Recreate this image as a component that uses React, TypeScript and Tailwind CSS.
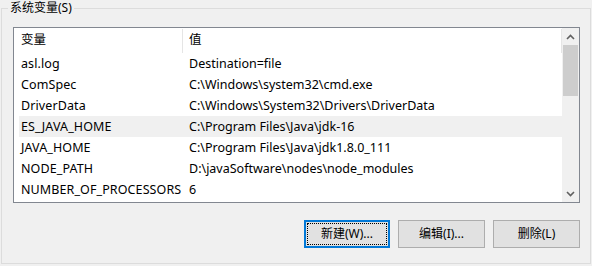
import React from "react";

const rows: [string, string][] = [
  ["asl.log", "Destination=file"],
  ["ComSpec", "C:\\Windows\\system32\\cmd.exe"],
  ["DriverData", "C:\\Windows\\System32\\Drivers\\DriverData"],
  ["ES_JAVA_HOME", "C:\\Program Files\\Java\\jdk-16"],
  ["JAVA_HOME", "C:\\Program Files\\Java\\jdk1.8.0_111"],
  ["NODE_PATH", "D:\\javaSoftware\\nodes\\node_modules"],
  ["NUMBER_OF_PROCESSORS", "6"],
];

const font = {
  fontFamily: '"Segoe UI", "Noto Sans", "Noto Sans CJK SC", sans-serif',
};

function Chevron({ up }: { up?: boolean }) {
  return (
    <svg width="9" height="6" viewBox="0 0 9 6">
      <polyline
        points={up ? "1,5 4.5,1.5 8,5" : "1,1 4.5,4.5 8,1"}
        fill="none"
        stroke="#606060"
        strokeWidth="1.6"
      />
    </svg>
  );
}

export default function App() {
  return (
    <div
      className="w-[592px] h-[266px] bg-[#f0f0f0] text-[12px] text-black pt-[8px] pl-[1px]"
      style={font}
    >
      <div className="relative w-[590px] h-[256px] border border-[#dcdcdc] pl-[11px] pt-[18px]">
        <div className="absolute left-[6px] top-[-9px] bg-[#f0f0f0] px-[2px] leading-[16px]">
          系统变量(S)
        </div>
        <div className="flex w-[567px] h-[176px] border border-[#828790] bg-white text-[12.5px]">
          <div className="flex-1 flex flex-col">
            <div className="flex h-[25px] items-center">
              <div className="w-[169px] h-[24px] pl-[7px] flex items-center border-r border-[#e5e5e5]">
                变量
              </div>
              <div className="flex-1 h-[24px] pl-[6px] flex items-center border-r border-[#e5e5e5]">
                值
              </div>
            </div>
            {rows.map(([k, v], i) => (
              <div
                key={k}
                className={
                  "flex h-[21px] items-center pt-[2px] ml-[5px] " +
                  (i === 3 ? "bg-[#f0f0f0]" : "")
                }
              >
                <div className="w-[170px] pl-[2px] whitespace-nowrap tracking-[0.1px]">{k}</div>
                <div className="whitespace-nowrap">{v}</div>
              </div>
            ))}
          </div>
          <div className="w-[17px] flex flex-col bg-[#f0f0f0]">
            <div className="h-[17px] flex items-center justify-center">
              <Chevron up />
            </div>
            <div className="mx-[1px] h-[51px] bg-[#cdcdcd]" />
            <div className="flex-1" />
            <div className="h-[17px] flex items-center justify-center">
              <Chevron />
            </div>
          </div>
        </div>
        <div className="flex justify-end gap-[8px] w-[567px] mt-[17px]">
          <button className="w-[86px] h-[28px] border-2 border-[#0078d7] bg-[#e1e1e1] p-[1px]">
            <div className="w-full h-full border border-dotted border-black flex items-center justify-center">
              新建(W)...
            </div>
          </button>
          <button className="w-[87px] h-[28px] border border-[#adadad] bg-[#e1e1e1] flex items-center justify-center">
            编辑(I)...
          </button>
          <button className="w-[87px] h-[28px] border border-[#adadad] bg-[#e1e1e1] flex items-center justify-center">
            删除(L)
          </button>
        </div>
      </div>
    </div>
  );
}
